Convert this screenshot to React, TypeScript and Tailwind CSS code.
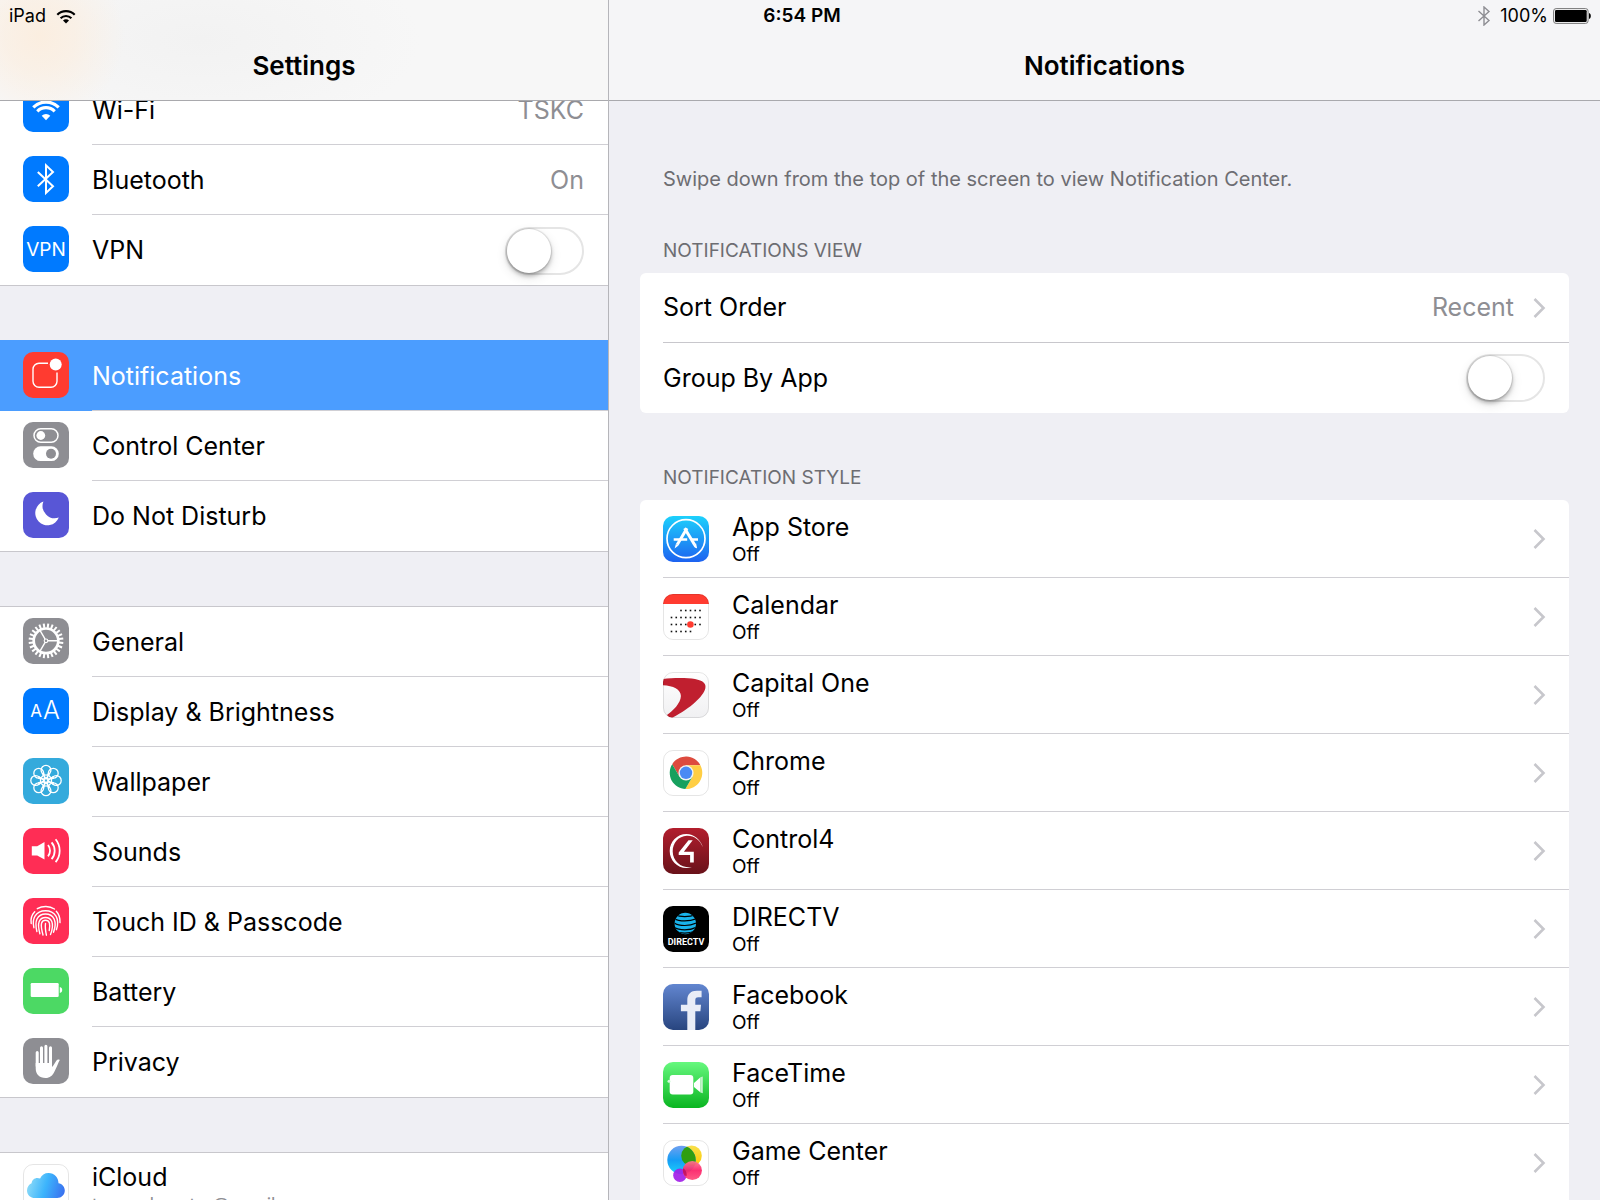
import React, { useId, useState } from "react";

const icon = "size-[46px] shrink-0";

function Tile({
  fill,
  to,
  outlined,
  children,
}: {
  fill: string;
  to?: string;
  outlined?: boolean;
  children?: React.ReactNode;
}) {
  const id = useId();
  return (
    <svg viewBox="0 0 46 46" className={icon} aria-hidden="true">
      <defs>
        <linearGradient id={id + "g"} x1="0" y1="0" x2="0" y2="1">
          <stop offset="0" stopColor={fill} />
          <stop offset="1" stopColor={to ?? fill} />
        </linearGradient>
        <clipPath id={id + "c"}>
          <rect width="46" height="46" rx="10" />
        </clipPath>
      </defs>
      <g clipPath={`url(#${id}c)`}>
        <rect width="46" height="46" fill={`url(#${id}g)`} />
        {children}
      </g>
      {outlined && (
        <rect x="0.5" y="0.5" width="45" height="45" rx="9.5" fill="none" stroke="#000" strokeOpacity="0.1" />
      )}
    </svg>
  );
}

function WifiIcon() {
  return (
    <Tile fill="#007aff">
      <g fill="none" stroke="#fff" strokeWidth="3.2">
        <path d="M10.3 21.3a18 18 0 0 1 25.4 0" />
        <path d="M14.3 25.3a12.3 12.3 0 0 1 17.4 0" />
      </g>
      <path d="M23 34.3l-4.3-4.5a6.3 6.3 0 0 1 8.6 0z" fill="#fff" />
    </Tile>
  );
}

function BluetoothIcon() {
  return (
    <Tile fill="#007aff">
      <path d="M14.8 16L30 30.3 23 37V9.3l7 6.7-15.2 14.3" fill="none" stroke="#fff" strokeWidth="2" />
    </Tile>
  );
}

function VpnIcon() {
  return (
    <Tile fill="#007aff">
      <text x="23" y="29.5" textAnchor="middle" fontSize="19" fill="#fff">
        VPN
      </text>
    </Tile>
  );
}

function NotificationsIcon() {
  return (
    <Tile fill="#ff3b30">
      <path
        d="M25 11.2h-9a6 6 0 0 0-6 6v12a6 6 0 0 0 6 6h12a6 6 0 0 0 6-6v-8.8"
        fill="none"
        stroke="#fff"
        strokeWidth="1.4"
      />
      <circle cx="32.7" cy="12.5" r="6" fill="#fff" />
    </Tile>
  );
}

function ControlCenterIcon() {
  return (
    <Tile fill="#8e8e93">
      <rect x="11" y="6.8" width="24" height="13.4" rx="6.7" fill="none" stroke="#fff" strokeWidth="1.5" />
      <circle cx="17.8" cy="13.5" r="4.4" fill="#fff" />
      <rect x="10.2" y="24.3" width="25.6" height="14.8" rx="7.4" fill="#fff" />
      <circle cx="28" cy="31.7" r="5" fill="#8e8e93" />
    </Tile>
  );
}

function MoonIcon() {
  return (
    <Tile fill="#5856d6">
      <path d="M20.4 9.6A12.2 12.2 0 1 0 35.8 25.6 12.3 12.3 0 0 1 20.4 9.6z" fill="#fff" />
    </Tile>
  );
}

function GearIcon() {
  return (
    <Tile fill="#8e8e93">
      <g stroke="#fff" transform="translate(23 22.8)">
        {Array.from({ length: 24 }, (_, i) => (
          <path key={i} d="M0-13v-4.4" strokeWidth="2" transform={`rotate(${i * 15 + 7.5})`} />
        ))}
        <circle r="12.3" fill="none" strokeWidth="2.7" />
        <path d="M1.8 0H12M-.9 1.6l-5.1 8.8M-.9-1.6L-6-10.4" strokeWidth="1.4" />
        <circle r="1.8" fill="none" strokeWidth="1.1" />
      </g>
    </Tile>
  );
}

function DisplayIcon() {
  return (
    <Tile fill="#007aff">
      <text x="7.3" y="29.3" fontSize="17" fill="#fff">
        A
      </text>
      <text x="20" y="31.3" fontSize="25" fontWeight="300" fill="#fff">
        A
      </text>
    </Tile>
  );
}

function WallpaperIcon() {
  return (
    <Tile fill="#34aadc">
      <g fill="none" stroke="#fff" strokeWidth="1.3" transform="translate(23 22.5)">
        {Array.from({ length: 8 }, (_, i) => (
          <g key={i} transform={`rotate(${i * 45})`}>
            <circle cy="-10.3" r="4.9" />
            <path d="M-3.9-7.4L0-1.8l3.9-5.6" />
          </g>
        ))}
        <circle r="2.4" />
      </g>
    </Tile>
  );
}

function SoundsIcon() {
  return (
    <Tile fill="#ff2d55">
      <path d="M8.8 18.2h5.4l7.3-4.2v17.6l-7.3-4.2H8.8z" fill="#fff" />
      <g fill="none" stroke="#fff" strokeWidth="1.8">
        <path d="M25 17a9 9 0 0 1 0 11.4" />
        <path d="M28.6 14.3a13 13 0 0 1 0 16.8" />
        <path d="M32.6 11.3a18 18 0 0 1 0 22.8" />
      </g>
    </Tile>
  );
}

function TouchIdIcon() {
  return (
    <Tile fill="#ff2d55">
      <g fill="none" stroke="#fff" strokeWidth="1.4" strokeLinecap="round">
        <path d="M14.3 10.7C19.5 7.7 26.5 7.7 31.5 11" />
        <path d="M8.2 25.5C7.3 20 9 16.5 11.7 13.7M33.3 13.3c2.8 3 3.9 7 3.7 11.3" />
        <path d="M10.9 29.7C9.8 25 10 21.5 12 18.2 16.5 11 28.5 11 33 18.2c2 3.5 2.2 8.3.4 13.5" />
        <path d="M13.9 33.5C12.7 28.5 12.3 24.5 14 21c3.4-6.7 13.7-6.7 17.1 0 1.7 3.8 1.2 8.5-.6 13.3" />
        <path d="M16.9 35.7C15.5 30.5 15 26.5 16.2 23.5c2.3-5.3 10.3-5.3 12.6 0 1.3 3.5.5 8.5-1.3 13" />
        <path d="M20 37c-1.2-4.5-2.3-9-1.4-12 1.3-3.6 6.5-3.6 7.8 0 .8 3.5.2 5.5-.2 7.5" />
        <path d="M22.5 25.5c-.4 3 0 7.3.9 11.7" />
      </g>
    </Tile>
  );
}

function BatteryIcon() {
  return (
    <Tile fill="#4cd964">
      <rect x="7.7" y="15" width="28" height="14" rx="1.2" fill="#fff" />
      <path d="M36.8 19c3.2.6 3.2 5.4 0 6z" fill="#fff" />
    </Tile>
  );
}

function HandIcon() {
  return (
    <Tile fill="#8e8e93">
      <g stroke="#fff" strokeWidth="3" strokeLinecap="round">
        <path d="M14.2 14.5V28M18.5 9.8V28M22.9 8.2V28M27.5 9.8V28" />
      </g>
      <path
        d="M12.7 25h16.3v4c2-2 3-4.6 4.3-6.3 1-1.3 2.3-1.3 3.5-.8-1.6 2.6-3 7.2-5.3 11.6C29.6 37.7 26.8 40 22.6 40c-6.4 0-9.9-4-9.9-9.5z"
        fill="#fff"
      />
    </Tile>
  );
}

function ICloudIcon() {
  return (
    <Tile fill="#ffffff" outlined>
      <defs>
        <linearGradient id="cloud" x1="0" y1="0.4" x2="1" y2="0.6">
          <stop offset="0" stopColor="#8edcf8" />
          <stop offset="0.5" stopColor="#3cb4fc" />
          <stop offset="1" stopColor="#3a73f0" />
        </linearGradient>
      </defs>
      <path
        d="M12 34C7.4 34 4 30.6 4 26.4c0-3.6 2.1-6 4.6-7.2.3-4.2 4.7-6.5 8.5-4.6C18.5 11 21.7 9 25.5 9c5.9 0 10 4.6 10 10.2 3.6.6 6.3 3.5 6.3 7.3 0 4.2-3.4 7.5-7.6 7.5z"
        fill="url(#cloud)"
      />
    </Tile>
  );
}

function AppStoreIcon() {
  return (
    <Tile fill="#1dd1fc" to="#1d62f0">
      <g fill="none" stroke="#fff">
        <circle cx="23" cy="22.7" r="19" strokeWidth="1.7" />
        <path d="M10.7 23.5h13.5M28.5 23.5h6.5" strokeWidth="2.4" />
        <path d="M24 12.2L14.2 28.7" strokeWidth="3" />
        <path d="M21.6 12.2l10 16.6" strokeWidth="3" />
      </g>
      <path d="M12.9 27.9l2.6 1.6-3.9 3zM30.3 29.3l2.8-1.7 1 4.7c-1.5.1-3-1-3.8-3z" fill="#fff" />
    </Tile>
  );
}

const calendarDots = [
  { y: 16, from: 2, to: 6 },
  { y: 23, from: 0, to: 6 },
  { y: 30, from: 0, to: 6 },
  { y: 37, from: 0, to: 4 },
];

function CalendarIcon() {
  return (
    <Tile fill="#ffffff" outlined>
      <rect width="46" height="10" fill="#ff3b30" />
      {calendarDots.map(({ y, from, to }) =>
        Array.from({ length: to - from + 1 }, (_, i) => (
          <rect key={`${y}-${i}`} x={7.7 + (from + i) * 4.75} y={y - 0.3} width="1.6" height="1.6" fill="#111" />
        )),
      )}
      <circle cx="27.4" cy="30.5" r="3.3" fill="#ff3b30" />
    </Tile>
  );
}

function CapitalOneIcon() {
  return (
    <Tile fill="#ffffff" to="#f0f0f2" outlined>
      <path
        d="M0 7C10 5.6 24 5.6 32 7c8 1.5 11.5 4.5 10.3 9.5C40.5 24 28 36 9.7 45.5 8 46 5 45 4 43c6-4.5 13.7-11.5 13.9-19C18 17.5 10 13.5 0 13.2z"
        fill="#c01f2f"
      />
    </Tile>
  );
}

function ChromeIcon() {
  return (
    <Tile fill="#ffffff" outlined>
      <g transform="translate(23 22.8)">
        <path d="M-13.78-8.67A16.3 16.3 0 0 1 14.4-7.6H0L-6.58 3.8z" fill="#dd4b3e" />
        <path d="M14.4-7.6A16.3 16.3 0 0 1-.62 16.27L6.58 3.8 0-7.6z" fill="#ffce44" />
        <path d="M-.62 16.27A16.3 16.3 0 0 1-13.78-8.67L-6.58 3.8 6.58 3.8z" fill="#17a05e" />
        <circle r="7.6" fill="#f2f2f2" />
        <circle r="6.2" fill="#4a8af4" />
      </g>
    </Tile>
  );
}

function Control4Icon() {
  return (
    <Tile fill="#b21e2d" to="#69121a">
      <path
        d="M40 19.5C37.5 11.5 31 6 23.5 6 14 6 6.7 13.7 6.7 23S14 40 23.5 40c2 0 3.7-.3 5.4-.8-9.6 1.3-19-5-19.2-15.7C9.6 14.8 15.7 8.2 23.7 7.8 30.9 7.4 37 12 40 19.5z"
        fill="#fff"
      />
      <path d="M25.5 12.3h4.2l-8.8 11.5h9.9v10.7h-3.7v-7.6H15.7v-2.4z" fill="#fff" />
    </Tile>
  );
}

function DirecTvIcon() {
  const id = useId();
  return (
    <Tile fill="#000000">
      <defs>
        <clipPath id={id}>
          <circle cx="22.3" cy="17.5" r="10.7" />
        </clipPath>
      </defs>
      <g clipPath={`url(#${id})`}>
        <rect x="11" y="6" width="23" height="23" fill="#19b4ec" />
        <g fill="none" stroke="#000" strokeWidth="1.2">
          <path d="M12 8.5c5 2.8 14 2.8 21 0M11 12.5c5 3.2 16 3.2 23 0M11 16.7c5 3.7 16 3.7 23 0M11 21c5 3.7 16 3.7 23 0M12 25.3c5 2.5 14 2.5 20 0" />
        </g>
      </g>
      <text x="23" y="39" textAnchor="middle" fontSize="9" fontWeight="700" fontFamily="Roboto" fill="#fff">
        DIRECTV
      </text>
    </Tile>
  );
}

function FacebookIcon() {
  return (
    <Tile fill="#6286d0" to="#28457f">
      <path
        d="M24.3 46V27.3h-6.4v-6.6h6.4V16c0-6 3.6-9.3 9.5-9.3h4.8v6.6h-3.2c-2.5 0-3.1 1-3.1 3.2v4.2H38l-.6 6.6h-5.1V46z"
        fill="#e9edf7"
      />
    </Tile>
  );
}

function FaceTimeIcon() {
  return (
    <Tile fill="#66f87e" to="#0ab521">
      <rect x="6.7" y="13" width="23.6" height="19.5" rx="3" fill="#fff" />
      <circle cx="6" cy="19.3" r="1.5" fill="#d6fbdc" />
      <path d="M31 21l6.5-5.7v15.2L31 25z" fill="#fff" />
      <path d="M37.5 15.3l2.3-.8v16.8l-2.3-.8z" fill="#c3f3cb" />
    </Tile>
  );
}

function GameCenterIcon() {
  const id = useId();
  return (
    <Tile fill="#ffffff" outlined>
      <defs>
        <linearGradient id={id + "b"} x1="0" y1="0" x2="0" y2="1">
          <stop offset="0" stopColor="#6fa0f0" />
          <stop offset="0.5" stopColor="#169cf5" />
          <stop offset="1" stopColor="#19d3fb" />
        </linearGradient>
        <linearGradient id={id + "y"} x1="0" y1="0" x2="0" y2="1">
          <stop offset="0" stopColor="#f8e04c" />
          <stop offset="1" stopColor="#fdc800" />
        </linearGradient>
        <linearGradient id={id + "p"} x1="0" y1="0" x2="0" y2="1">
          <stop offset="0" stopColor="#ff7a92" />
          <stop offset="0.5" stopColor="#fb2168" />
          <stop offset="1" stopColor="#ff4d7c" />
        </linearGradient>
        <clipPath id={id + "c"}>
          <circle cx="18.5" cy="20" r="14.2" />
        </clipPath>
      </defs>
      <circle cx="28.5" cy="15.8" r="10.3" fill={`url(#${id}y)`} />
      <circle cx="18.5" cy="20" r="14.2" fill={`url(#${id}b)`} />
      <circle cx="28.5" cy="15.8" r="10.3" fill="#2f9e12" clipPath={`url(#${id}c)`} />
      <circle cx="16.9" cy="35.3" r="6.7" fill="#a21fe8" fillOpacity="0.92" />
      <circle cx="29.3" cy="30.5" r="9.6" fill={`url(#${id}p)`} fillOpacity="0.93" />
      <path d="M21.5 35.6a9.6 9.6 0 0 1-1.5-7.3c2.3 1 4 4 3.6 7.7z" fill="#b00a5e" fillOpacity="0.7" />
    </Tile>
  );
}

function Chevron() {
  return (
    <svg viewBox="0 0 13 20" className="h-5 w-[13px] shrink-0" aria-hidden="true">
      <path d="M1.5 1l9 9-9 9" fill="none" stroke="#c7c7cc" strokeWidth="2.6" />
    </svg>
  );
}

function Switch({ id, labelledBy }: { id: string; labelledBy: string }) {
  const [on, setOn] = useState(false);
  return (
    <label htmlFor={id} className="relative block h-12 w-[79px] shrink-0 cursor-pointer">
      <input
        id={id}
        type="checkbox"
        role="switch"
        aria-labelledby={labelledBy}
        checked={on}
        onChange={(e) => setOn(e.target.checked)}
        className="peer block h-12 w-[79px] appearance-none rounded-full border-2 border-[#e5e5e5] bg-white checked:border-[#4cd964] checked:bg-[#4cd964]"
      />
      <span className="absolute top-0.5 left-0.5 size-11 rounded-full bg-white shadow-[0_3px_4px_rgba(0,0,0,0.26),0_4px_12px_rgba(0,0,0,0.12),0_0_1px_1px_rgba(0,0,0,0.1)] peer-checked:left-[33px]" />
    </label>
  );
}

type Item = {
  title: string;
  Icon: React.ComponentType;
  value?: string;
  detail?: string;
  toggle?: boolean;
  current?: boolean;
};

const groups: Item[][] = [
  [
    { title: "Wi-Fi", Icon: WifiIcon, value: "TSKC" },
    { title: "Bluetooth", Icon: BluetoothIcon, value: "On" },
    { title: "VPN", Icon: VpnIcon, toggle: true },
  ],
  [
    { title: "Notifications", Icon: NotificationsIcon, current: true },
    { title: "Control Center", Icon: ControlCenterIcon },
    { title: "Do Not Disturb", Icon: MoonIcon },
  ],
  [
    { title: "General", Icon: GearIcon },
    { title: "Display & Brightness", Icon: DisplayIcon },
    { title: "Wallpaper", Icon: WallpaperIcon },
    { title: "Sounds", Icon: SoundsIcon },
    { title: "Touch ID & Passcode", Icon: TouchIdIcon },
    { title: "Battery", Icon: BatteryIcon },
    { title: "Privacy", Icon: HandIcon },
  ],
  [{ title: "iCloud", Icon: ICloudIcon, detail: "townsdmaster@gmail.com" }],
];

const apps = [
  { title: "App Store", Icon: AppStoreIcon },
  { title: "Calendar", Icon: CalendarIcon },
  { title: "Capital One", Icon: CapitalOneIcon },
  { title: "Chrome", Icon: ChromeIcon },
  { title: "Control4", Icon: Control4Icon },
  { title: "DIRECTV", Icon: DirecTvIcon },
  { title: "Facebook", Icon: FacebookIcon },
  { title: "FaceTime", Icon: FaceTimeIcon },
  { title: "Game Center", Icon: GameCenterIcon },
];

function SidebarRow({ item }: { item: Item }) {
  const { title, Icon, value, detail, toggle, current } = item;
  const shell = "flex h-[70px] items-center gap-[23px] pl-[23px]";
  const body = (
    <>
      <span className="pb-0.5">
        <Icon />
      </span>
      <span className="flex flex-1 items-center justify-between self-stretch border-b border-[#d0cfd4] pt-0.5 pr-6 group-data-[last]:border-transparent">
        {detail ? (
          <span className="flex flex-col pt-0.5">
            <span>{title}</span>
            <span className="text-[18px] leading-6 text-[#8e8e93]">{detail}</span>
          </span>
        ) : (
          <span id={toggle ? "vpn-label" : undefined}>{title}</span>
        )}
        {value && <span className="text-[#8e8e93]">{value}</span>}
        {toggle && <Switch id="vpn-switch" labelledBy="vpn-label" />}
      </span>
    </>
  );
  if (toggle) return <div className={shell}>{body}</div>;
  return (
    <a
      href="#"
      aria-current={current ? "page" : undefined}
      className={current ? `${shell} bg-[#4b9dff] text-white` : shell}
    >
      {body}
    </a>
  );
}

function StatusBar() {
  return (
    <div className="absolute inset-x-0 top-0 z-20 grid h-8 grid-cols-3 items-center px-[9px] text-[18px] leading-6">
      <div className="flex items-center gap-2.5">
        <span>iPad</span>
        <svg viewBox="0 0 20 15" className="h-[15px] w-5" aria-label="Wi-Fi">
          <g fill="none" stroke="#000" strokeWidth="2.2">
            <path d="M1.3 5.8a12.3 12.3 0 0 1 17.4 0" />
            <path d="M4.6 9.2a7.7 7.7 0 0 1 10.8 0" />
          </g>
          <path d="M10 14.6l-3-3a4.2 4.2 0 0 1 6 0z" />
        </svg>
      </div>
      <span className="pl-1 text-center text-[19px] font-semibold">6:54 PM</span>
      <div className="flex items-center justify-end gap-[5px]">
        <svg viewBox="0 0 14 20" className="mr-1 h-5 w-3.5" aria-label="Bluetooth">
          <path d="M1.5 5l10.5 9.5L7 19V1l5 4.5L1.5 15" fill="none" stroke="#8e8e93" strokeWidth="1.4" />
        </svg>
        <span>100%</span>
        <svg viewBox="0 0 38 16" className="h-4 w-[38px]" aria-label="Battery full">
          <rect x="0.6" y="0.6" width="34.5" height="14.8" rx="2.5" fill="none" stroke="#777" strokeWidth="1" />
          <rect x="2" y="2" width="31.7" height="12" rx="1.2" />
          <path d="M36 5c2.4.6 2.4 5.4 0 6z" />
        </svg>
      </div>
    </div>
  );
}

export default function App() {
  return (
    <div className="relative grid h-screen grid-cols-[38%_1fr] overflow-hidden bg-[#efeff4] font-[Inter,'Liberation_Sans',sans-serif] text-[25px] leading-[31px] text-black">
      <StatusBar />

      <div className="flex min-h-0 flex-col">
        <header className="z-10 flex h-[101px] shrink-0 items-end justify-center border-b border-[#a9a9ad] bg-[#f7f7f7] bg-[radial-gradient(circle_at_40px_36px,#fbeee0_0,rgba(251,238,224,0.7)_35px,transparent_85px),radial-gradient(220px_100px_at_200px_40px,#f2f2f2_0,transparent_100%)] pb-[19px]">
          <h1 className="text-[26px] font-semibold">Settings</h1>
        </header>
        <nav aria-label="Settings" className="min-h-0 flex-1 overflow-y-auto [scrollbar-width:none]">
          <div className="-mt-[27px] flex flex-col gap-[54px]">
            {groups.map((items, g) => (
              <ul key={g} className="border-y border-[#c8c7cc] bg-white has-[[aria-current]]:border-t-[#4b9dff]">
                {items.map((item, i) => (
                  <li key={item.title} data-last={i === items.length - 1 ? "" : undefined} className="group">
                    <SidebarRow item={item} />
                  </li>
                ))}
              </ul>
            ))}
          </div>
        </nav>
      </div>

      <div className="flex min-h-0 flex-col border-l border-[#b5b5ba]">
        <header className="z-10 flex h-[101px] shrink-0 items-end justify-center border-b border-[#a9a9ad] bg-[#f5f5f7] pb-[19px]">
          <h2 className="text-[26px] font-semibold">Notifications</h2>
        </header>
        <main className="min-h-0 flex-1 overflow-y-auto px-[31px] pt-[66px] [scrollbar-width:none]">
          <p className="px-[23px] text-[20px] leading-6 text-[#6d6d72]">
            Swipe down from the top of the screen to view Notification Center.
          </p>

          <h3 className="mt-12 px-[23px] text-[19px] leading-6 text-[#6d6d72]">NOTIFICATIONS VIEW</h3>
          <div className="mt-2.5 rounded-md bg-white pl-[23px]">
            <button
              type="button"
              className="flex h-[70px] w-full items-center justify-between border-b border-[#c8c7cc] pr-[23px]"
            >
              <span>Sort Order</span>
              <span className="flex items-center gap-[19px] text-[#8e8e93]">
                Recent
                <Chevron />
              </span>
            </button>
            <div className="flex h-[70px] items-center justify-between pr-6">
              <span id="group-label">Group By App</span>
              <Switch id="group-switch" labelledBy="group-label" />
            </div>
          </div>

          <h3 className="mt-[53px] px-[23px] text-[19px] leading-6 text-[#6d6d72]">NOTIFICATION STYLE</h3>
          <ul className="mt-2.5 rounded-t-md bg-white pl-[23px]">
            {apps.map(({ title, Icon }) => (
              <li key={title} className="border-b border-[#d0cfd4]">
                <a href="#" className="flex h-[77px] items-center gap-[23px] pr-[23px]">
                  <Icon />
                  <span className="flex flex-1 flex-col pt-0.5">
                    <span>{title}</span>
                    <span className="text-[19px] leading-6">Off</span>
                  </span>
                  <Chevron />
                </a>
              </li>
            ))}
          </ul>
        </main>
      </div>
    </div>
  );
}
